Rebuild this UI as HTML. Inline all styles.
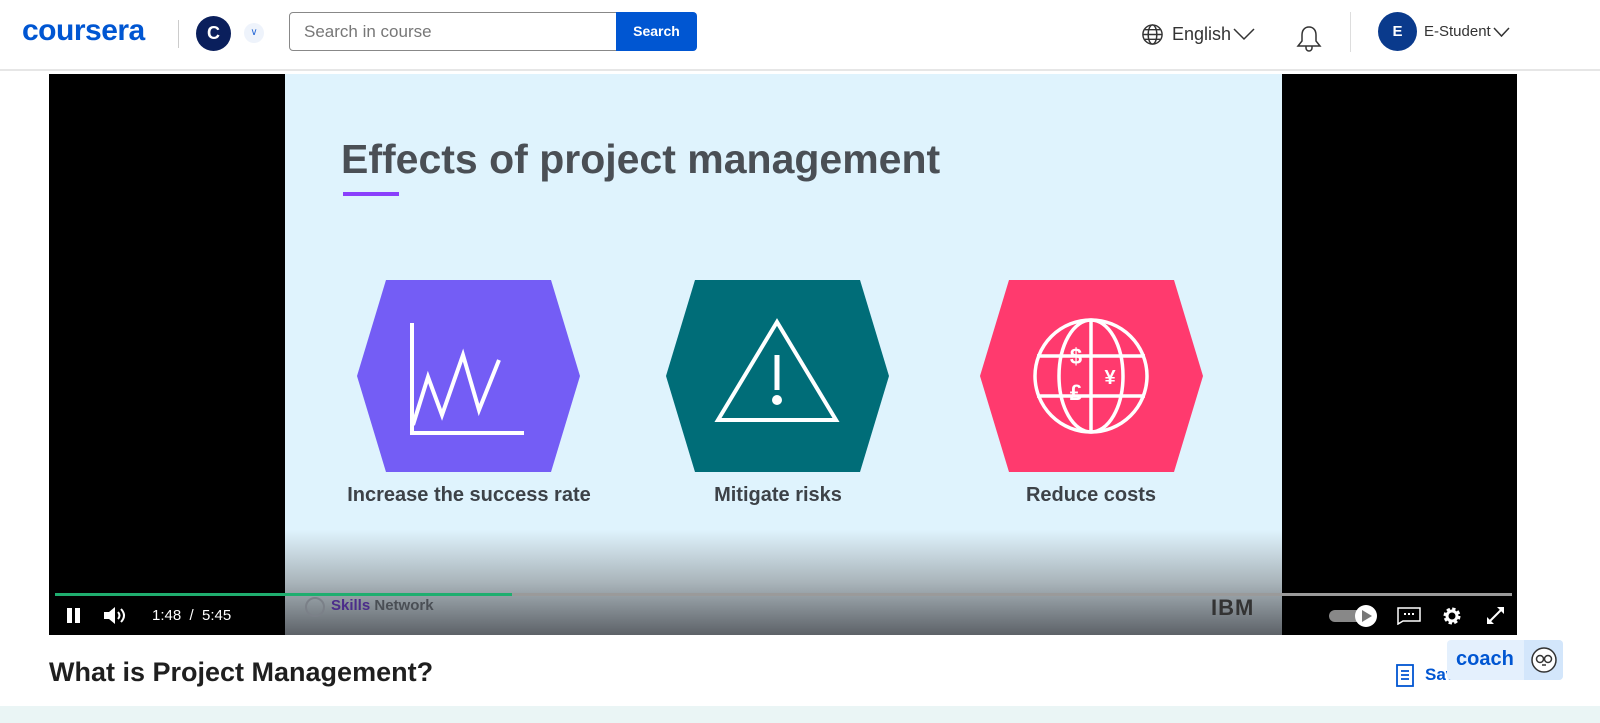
<!DOCTYPE html>
<html><head><meta charset="utf-8"><style>
*{margin:0;padding:0;box-sizing:border-box}
body{width:1600px;height:723px;overflow:hidden;background:#fff;font-family:"Liberation Sans",sans-serif;position:relative}
.abs{position:absolute}
.hex{position:absolute;width:223px;height:192px;clip-path:polygon(0 50%,13% 0,87% 0,100% 50%,87% 100%,13% 100%)}
.lbl{position:absolute;font-size:20px;font-weight:bold;color:#3d4248;text-align:center;width:300px}
</style></head><body>
<!-- header -->
<div class="abs" style="left:22px;top:14px;font-size:30px;font-weight:bold;color:#0056d2;letter-spacing:-0.5px">coursera</div>
<div class="abs" style="left:178px;top:20px;width:1px;height:28px;background:#ccc"></div>
<div class="abs" style="left:196px;top:16px;width:35px;height:35px;border-radius:50%;background:#0a1f5c;color:#fff;font-size:18px;font-weight:bold;text-align:center;line-height:35px">C</div>
<div class="abs" style="left:244px;top:23px;width:20px;height:20px;border-radius:50%;background:#eef3fb;color:#2a6ad6;font-size:10px;text-align:center;line-height:20px">&#8744;</div>
<div class="abs" style="left:289px;top:12px;width:328px;height:39px;border:1px solid #888;border-radius:4px 0 0 4px;font-size:17px;color:#777;padding:9px 14px">Search in course</div>
<div class="abs" style="left:616px;top:12px;width:81px;height:39px;background:#0056d2;border-radius:0 4px 4px 0;color:#fff;font-size:14px;font-weight:bold;text-align:center;line-height:39px">Search</div>
<svg class="abs" style="left:1141px;top:23px" width="23" height="23" viewBox="0 0 24 24" fill="none" stroke="#333" stroke-width="1.5"><circle cx="12" cy="12" r="10"/><ellipse cx="12" cy="12" rx="4.5" ry="10"/><path d="M2 12h20M4 7h16M4 17h16"/></svg>
<div class="abs" style="left:1172px;top:24px;font-size:18px;color:#333">English</div>
<svg class="abs" style="left:1233px;top:28px" width="22" height="13" viewBox="0 0 22 13"><path d="M1 1l10 10 10-10" fill="none" stroke="#333" stroke-width="1.5"/></svg>
<svg class="abs" style="left:1296px;top:25px" width="26" height="28" viewBox="0 0 26 28" fill="none" stroke="#333" stroke-width="1.5"><path d="M13 2c-5 0-7 4-7 8v6l-4 5h22l-4-5v-6c0-4-2-8-7-8zM10 21v2a3 3 0 0 0 6 0v-2"/></svg>
<div class="abs" style="left:1350px;top:12px;width:1px;height:40px;background:#ddd"></div>
<div class="abs" style="left:1378px;top:12px;width:39px;height:39px;border-radius:50%;background:#0a3a8c;color:#fff;font-size:15px;font-weight:bold;text-align:center;line-height:39px">E</div>
<div class="abs" style="left:1424px;top:23px;font-size:15px;color:#333">E-Student</div>
<svg class="abs" style="left:1493px;top:27px" width="17" height="11" viewBox="0 0 17 11"><path d="M1 1l7.5 8 7.5-8" fill="none" stroke="#333" stroke-width="1.5"/></svg>
<div class="abs" style="left:0;top:69px;width:1600px;height:2px;background:#e6e6e6"></div>
<!-- video -->
<div class="abs" style="left:49px;top:74px;width:1468px;height:561px;background:#000"></div>
<div class="abs" style="left:285px;top:74px;width:997px;height:561px;background:#dff3fd"></div>
<div class="abs" style="left:285px;top:530px;width:997px;height:105px;background:linear-gradient(#dff3fd00,#a9b4ba 50%,#5d6268)"></div>
<div class="abs" style="left:341px;top:136px;font-size:41px;font-weight:bold;color:#4a4f55">Effects of project management</div>
<div class="abs" style="left:343px;top:192px;width:56px;height:4px;background:#8a3ffc"></div>
<div class="hex" style="left:357px;top:280px;background:#745df5"></div>
<svg class="abs" style="left:357px;top:280px" width="223" height="192" viewBox="0 0 223 192" fill="none" stroke="#fff" stroke-width="4"><path d="M55 43v110h112M56 145l15-48 14 38 21-60 16 55 20-50"/></svg>
<div class="hex" style="left:666px;top:280px;background:#006d78"></div>
<svg class="abs" style="left:666px;top:280px" width="223" height="192" viewBox="0 0 223 192" fill="none" stroke="#fff" stroke-width="4"><path d="M111 42l-59 98h118z"/><path d="M111 75v35" stroke-width="5"/><circle cx="111" cy="120" r="5" fill="#fff" stroke="none"/></svg>
<div class="hex" style="left:980px;top:280px;background:#ff3a6e"></div>
<svg class="abs" style="left:980px;top:280px" width="223" height="192" viewBox="0 0 223 192" fill="none" stroke="#fff" stroke-width="3.5"><circle cx="111" cy="96" r="56"/><ellipse cx="111" cy="96" rx="32" ry="56"/><path d="M111 40v112M57 76h108M57 116h108"/><text x="96" y="84" fill="#fff" stroke="none" font-size="22" font-weight="bold" text-anchor="middle" font-family="Liberation Sans">$</text><text x="130" y="104" fill="#fff" stroke="none" font-size="20" font-weight="bold" text-anchor="middle" font-family="Liberation Sans">¥</text><text x="96" y="120" fill="#fff" stroke="none" font-size="22" font-weight="bold" text-anchor="middle" font-family="Liberation Sans">£</text></svg>
<div class="lbl" style="left:319px;top:484px">Increase the success rate</div>
<div class="lbl" style="left:628px;top:484px">Mitigate risks</div>
<div class="lbl" style="left:941px;top:484px">Reduce costs</div>
<!-- controls -->
<div class="abs" style="left:55px;top:593px;width:1457px;height:3px;background:#9a9a9a"></div>
<div class="abs" style="left:55px;top:593px;width:457px;height:3px;background:#1fae6f"></div>
<div class="abs" style="left:305px;top:597px;width:20px;height:20px;border-radius:50%;border:2px solid #7b8088"></div>
<div class="abs" style="left:331px;top:597px;font-size:15px;font-weight:bold;color:#4b2c8a">Skills <span style="color:#4a4f55">Network</span></div>
<div class="abs" style="left:1211px;top:595px;font-size:22px;font-weight:bold;color:#333;letter-spacing:1px">IBM</div>
<div class="abs" style="left:67px;top:608px;width:5px;height:15px;background:#fff"></div>
<div class="abs" style="left:75px;top:608px;width:5px;height:15px;background:#fff"></div>
<svg class="abs" style="left:103px;top:606px" width="24" height="19" viewBox="0 0 24 19"><path d="M1 6h5l6-5v17l-6-5H1z" fill="#fff"/><path d="M15 6q3 3.5 0 7M18 3q6 6.5 0 13" stroke="#fff" stroke-width="2" fill="none"/></svg>
<div class="abs" style="left:152px;top:607px;font-size:15px;color:#fff">1:48 &nbsp;/ &nbsp;5:45</div>
<div class="abs" style="left:1329px;top:610px;width:40px;height:12px;border-radius:6px;background:#888"></div>
<div class="abs" style="left:1355px;top:605px;width:22px;height:22px;border-radius:50%;background:#fff"></div>
<svg class="abs" style="left:1362px;top:610px" width="10" height="12"><path d="M0 0l10 6-10 6z" fill="#777"/></svg>
<svg class="abs" style="left:1397px;top:607px" width="24" height="18" viewBox="0 0 24 18"><path d="M1 1h22v13H6l-5 3z" fill="none" stroke="#fff" stroke-width="1.5"/><path d="M7 7h2M11 7h2M15 7h2" stroke="#fff" stroke-width="2"/></svg>
<svg class="abs" style="left:1442px;top:606px" width="20" height="20" viewBox="0 0 20 20"><circle cx="10" cy="10" r="6.5" fill="none" stroke="#fff" stroke-width="4" stroke-dasharray="3 2.1"/><circle cx="10" cy="10" r="5" fill="none" stroke="#fff" stroke-width="3"/></svg>
<svg class="abs" style="left:1485px;top:605px" width="21" height="21" viewBox="0 0 21 21"><path d="M3 18L18 3" stroke="#fff" stroke-width="2"/><path d="M12 2h7v7zM2 12v7h7z" fill="#fff"/></svg>
<!-- below -->
<div class="abs" style="left:49px;top:657px;font-size:27px;font-weight:bold;color:#1f1f1f">What is Project Management?</div>
<svg class="abs" style="left:1396px;top:664px" width="18" height="23" viewBox="0 0 18 23" fill="none" stroke="#0056d2" stroke-width="1.8"><rect x="1" y="1" width="16" height="21"/><path d="M5 7h8M5 11h8M5 15h8"/></svg>
<div class="abs" style="left:1425px;top:665px;font-size:17px;font-weight:bold;color:#0056d2">Save note</div>
<div class="abs" style="left:1447px;top:640px;width:116px;height:40px;background:#e4f0fd;border-radius:4px"></div>
<div class="abs" style="left:1456px;top:648px;font-size:20px;font-weight:bold;color:#0056d2">coach</div>
<div class="abs" style="left:1524px;top:640px;width:39px;height:40px;background:#d3e6fb;border-radius:0 4px 4px 0"></div>
<svg class="abs" style="left:1530px;top:646px" width="28" height="28" viewBox="0 0 28 28" fill="#fff" stroke="#333" stroke-width="1.5"><circle cx="14" cy="14" r="12"/><circle cx="10" cy="13" r="3.5"/><circle cx="18" cy="13" r="3.5"/><path d="M12 19h4"/></svg>
<div class="abs" style="left:0;top:706px;width:1600px;height:17px;background:#eaf5f5"></div>
</body></html>
